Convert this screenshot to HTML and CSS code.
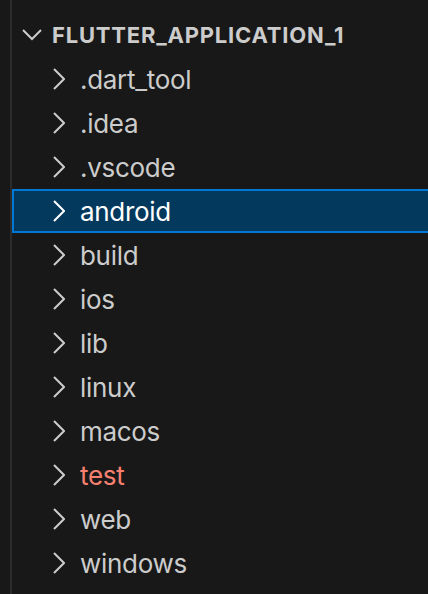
FILE: index.html
```html
<!DOCTYPE html>
<html>
<head>
<meta charset="utf-8">
<link rel="stylesheet" href="styles.css">
</head>
<body>
<div class="pane">
  <div class="gutter"></div>
  <div class="tree">
    <div class="header">
      <svg class="down" width="20" height="12" viewBox="0 0 20 12"><path d="M1 1 L10 10 L19 1" fill="none" stroke="#cccccc" stroke-width="2"/></svg>
      <span class="title">FLUTTER_APPLICATION_1</span>
    </div>
    <div class="row"><svg class="chev" width="12" height="22" viewBox="0 0 12 22"><path d="M1 1 L11 11 L1 21" fill="none" stroke="#cccccc" stroke-width="2"/></svg><span class="name">.dart_tool</span></div>
    <div class="row"><svg class="chev" width="12" height="22" viewBox="0 0 12 22"><path d="M1 1 L11 11 L1 21" fill="none" stroke="#cccccc" stroke-width="2"/></svg><span class="name">.idea</span></div>
    <div class="row"><svg class="chev" width="12" height="22" viewBox="0 0 12 22"><path d="M1 1 L11 11 L1 21" fill="none" stroke="#cccccc" stroke-width="2"/></svg><span class="name">.vscode</span></div>
    <div class="row selected"><svg class="chev" width="12" height="22" viewBox="0 0 12 22"><path d="M1 1 L11 11 L1 21" fill="none" stroke="#ffffff" stroke-width="2"/></svg><span class="name">android</span></div>
    <div class="row"><svg class="chev" width="12" height="22" viewBox="0 0 12 22"><path d="M1 1 L11 11 L1 21" fill="none" stroke="#cccccc" stroke-width="2"/></svg><span class="name">build</span></div>
    <div class="row"><svg class="chev" width="12" height="22" viewBox="0 0 12 22"><path d="M1 1 L11 11 L1 21" fill="none" stroke="#cccccc" stroke-width="2"/></svg><span class="name">ios</span></div>
    <div class="row"><svg class="chev" width="12" height="22" viewBox="0 0 12 22"><path d="M1 1 L11 11 L1 21" fill="none" stroke="#cccccc" stroke-width="2"/></svg><span class="name">lib</span></div>
    <div class="row"><svg class="chev" width="12" height="22" viewBox="0 0 12 22"><path d="M1 1 L11 11 L1 21" fill="none" stroke="#cccccc" stroke-width="2"/></svg><span class="name">linux</span></div>
    <div class="row"><svg class="chev" width="12" height="22" viewBox="0 0 12 22"><path d="M1 1 L11 11 L1 21" fill="none" stroke="#cccccc" stroke-width="2"/></svg><span class="name">macos</span></div>
    <div class="row"><svg class="chev" width="12" height="22" viewBox="0 0 12 22"><path d="M1 1 L11 11 L1 21" fill="none" stroke="#cccccc" stroke-width="2"/></svg><span class="name error">test</span></div>
    <div class="row"><svg class="chev" width="12" height="22" viewBox="0 0 12 22"><path d="M1 1 L11 11 L1 21" fill="none" stroke="#cccccc" stroke-width="2"/></svg><span class="name">web</span></div>
    <div class="row"><svg class="chev" width="12" height="22" viewBox="0 0 12 22"><path d="M1 1 L11 11 L1 21" fill="none" stroke="#cccccc" stroke-width="2"/></svg><span class="name">windows</span></div>
  </div>
</div>
</body>
</html>
```
FILE: styles.css
```css
html, body {
  margin: 0;
  padding: 0;
  background: #181818;
  height: 100%;
  overflow: hidden;
}
.pane {
  display: flex;
  height: 594px;
  font-family: Inter, "Noto Sans", sans-serif;
  color: #cccccc;
}
.gutter {
  width: 10px;
  flex: none;
  border-right: 2px solid #2b2b2b;
}
.tree {
  flex: 1;
  display: flex;
  flex-direction: column;
  padding-top: 13px;
}
.header {
  height: 44px;
  display: flex;
  align-items: center;
  padding-left: 10px;
}
.down {
  display: block;
  flex: none;
  margin-right: 10px;
}
.title {
  font-weight: 700;
  font-size: 22px;
  letter-spacing: 0.8px;
}
.row {
  height: 44px;
  box-sizing: border-box;
  display: flex;
  align-items: center;
  padding-left: 41px;
  font-size: 26px;
  border: 2px solid transparent;
  margin-right: -2px;
}
.row .chev {
  display: block;
  flex: none;
  margin-left: -2px;
  margin-right: 16px;
}
.row .name {
  margin-left: -1px;
  letter-spacing: -0.3px;
}
.row.selected {
  background: #04395e;
  border-color: #0078d4;
  color: #ffffff;
}
.error {
  color: #f88070;
}
```
